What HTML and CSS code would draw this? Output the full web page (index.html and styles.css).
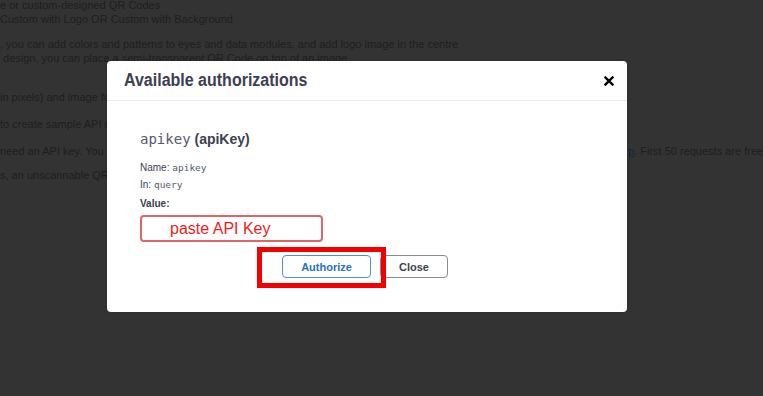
FILE: index.html
```html
<!DOCTYPE html>
<html lang="en">
<head>
    <meta charset="UTF-8">
    <meta name="viewport" content="width=device-width, initial-scale=1.0">
    <title>Available authorizations</title>
    <link rel="stylesheet" href="styles.css">
</head>
<body>
    <main class="doc">
        <p class="doc-line first">e or custom-designed QR Codes</p>
        <p class="doc-line">Custom with Logo OR Custom with Background</p>
        <p class="doc-line gap-small">, you can add colors and patterns to eyes and data modules, and add logo image in the centre</p>
        <p class="doc-line">&nbsp;design, you can place a semi-transparent QR Code on top of an image</p>
        <p class="doc-line gap-large">in pixels) and image fo</p>
        <p class="doc-line gap-mid">to create sample API r</p>
        <p class="doc-line gap-mid key-line">
            <span class="key-left">need an API key. You c</span><span class="key-right"><a href="#">p</a>. First 50 requests are free</span>
        </p>
        <p class="doc-line gap-tight">s, an unscannable QR</p>
    </main>

    <div class="modal">
        <div class="modal-header">
            <h2>Available authorizations</h2>
            <button class="modal-close" aria-label="Close">
                <svg width="10" height="10" viewBox="0 0 10 10">
                    <path d="M1.5 1.5 L8.5 8.5 M8.5 1.5 L1.5 8.5" stroke="#000" stroke-width="2.4" stroke-linecap="square"/>
                </svg>
            </button>
        </div>
        <div class="modal-body">
            <h4 class="scheme"><code>apikey</code> (apiKey)</h4>
            <p class="meta">Name: <code>apikey</code></p>
            <p class="meta">In: <code>query</code></p>
            <label class="value-label">Value:</label>
            <div class="value-input">paste API Key</div>
            <div class="actions">
                <div class="authorize-wrap">
                    <button class="btn btn-authorize">Authorize</button>
                    <span class="highlight"></span>
                </div>
                <button class="btn btn-close">Close</button>
            </div>
        </div>
    </div>
</body>
</html>
```

FILE: styles.css
```css
body {
    margin: 0;
    height: 396px;
    overflow: hidden;
    background-color: #333333;
    font-family: 'Liberation Sans', Arial, sans-serif;
    position: relative;
}
.doc {
    color: #1e1e1e;
    font-size: 11px;
}
.doc-line {
    margin: 0;
    line-height: 14px;
    white-space: nowrap;
}
.doc-line.first {
    margin-top: -2px;
}
.gap-small {
    margin-top: 11px;
}
.gap-large {
    margin-top: 25px;
}
.gap-mid {
    margin-top: 13px;
}
.gap-tight {
    margin-top: 10px;
}
.key-line {
    display: flex;
}
.key-left {
    display: inline-block;
    width: 628px;
    overflow: hidden;
    flex-shrink: 0;
}
.key-right a {
    color: #17243c;
}

.modal {
    position: absolute;
    left: 107px;
    top: 61px;
    width: 520px;
    height: 251px;
    background-color: #fff;
    border-radius: 4px;
    box-shadow: 0 0 3px rgba(0, 0, 0, 0.15);
}
.modal-header {
    display: flex;
    align-items: center;
    justify-content: space-between;
    height: 39px;
    padding: 0 13px 0 17px;
    border-bottom: 1px solid #ebebeb;
}
.modal-header h2 {
    margin: 0;
    font-size: 16px;
    font-weight: bold;
    color: #3b4151;
    transform: scaleY(1.1);
}
.modal-close {
    border: none;
    background: none;
    padding: 0;
    display: flex;
}
.modal-body {
    padding: 29px 0 0 33px;
    color: #3b4151;
}
.scheme {
    margin: 0;
    font-size: 14px;
    line-height: 18px;
    font-weight: bold;
}
.scheme code {
    font-family: 'DejaVu Sans Mono', monospace;
    font-weight: normal;
    font-size: 14px;
    color: #555a66;
}
.meta {
    margin: 0;
    font-size: 10px;
    line-height: 13px;
}
.meta:first-of-type {
    margin-top: 13px;
}
.meta + .meta {
    margin-top: 4px;
}
.meta code {
    font-family: 'DejaVu Sans Mono', monospace;
    font-size: 9.5px;
    line-height: 13px;
    color: #555a66;
}
.value-label {
    display: block;
    margin-top: 6px;
    font-size: 10px;
    line-height: 13px;
    font-weight: bold;
}
.value-input {
    box-sizing: border-box;
    width: 183px;
    height: 27px;
    margin-top: 5px;
    padding-left: 28px;
    border: 2px solid #e06468;
    border-radius: 4px;
    color: #ee1c1c;
    font-size: 16px;
    line-height: 23px;
}
.actions {
    display: flex;
    gap: 9px;
    margin: 13px 0 0 142px;
}
.authorize-wrap {
    position: relative;
    display: flex;
}
.btn {
    box-sizing: border-box;
    height: 23px;
    background: #fff;
    border-radius: 4px;
    font-family: 'Liberation Sans', Arial, sans-serif;
    font-size: 11px;
    font-weight: bold;
    padding: 0;
}
.btn-authorize {
    width: 89px;
    border: 1.5px solid #4990e2;
    color: #2a6fc0;
}
.btn-close {
    width: 68px;
    border: 1.5px solid #8a8a8a;
    color: #3b4151;
}
.highlight {
    position: absolute;
    left: -25px;
    top: -8px;
    width: 129px;
    height: 41px;
    box-sizing: border-box;
    border: 5px solid #f40000;
}
```
